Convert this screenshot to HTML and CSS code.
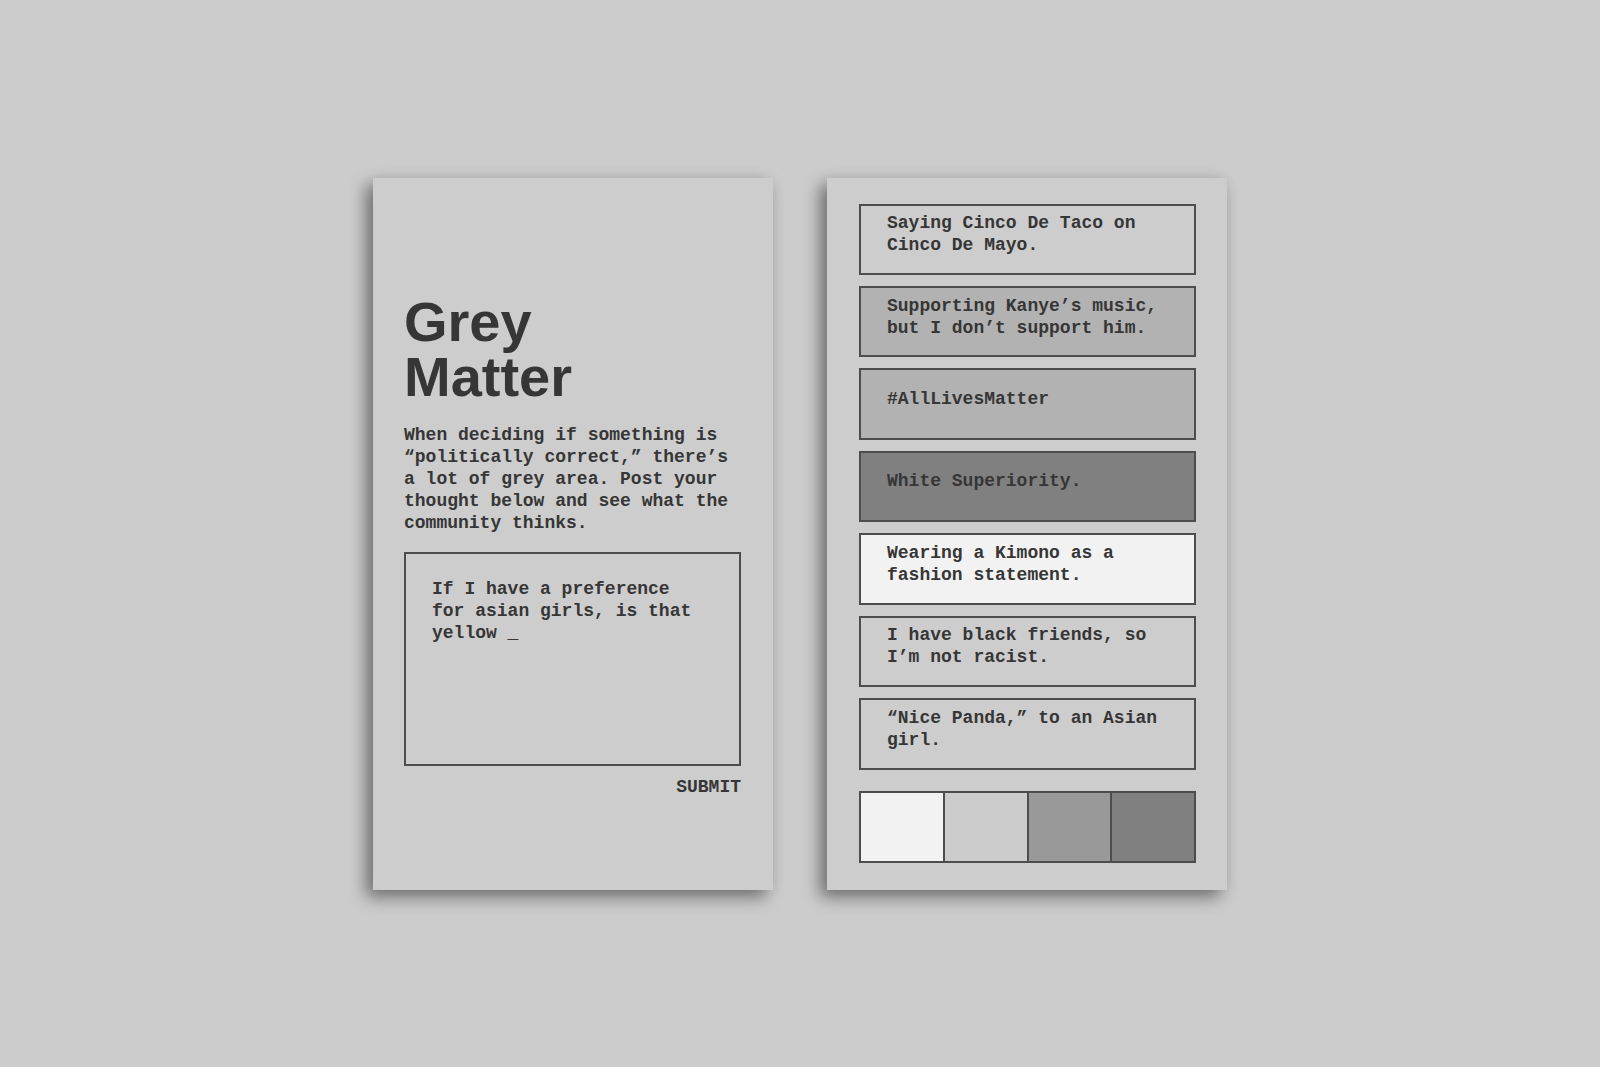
FILE: index.html
```html
<!doctype html>
<html lang="en">
<head>
	<meta charset="UTF-8">
	<meta name="viewport" content="width=device-width, initial-scale=1">
	<title>Grey Matter</title>
	<link rel="stylesheet" href="styles.css">
</head>
<body>
	<main class="screens">
		<form class="screen post">
			<h1>Grey<br>Matter</h1>
			<p class="intro"><label for="thought">When deciding if something is “politically correct,” there’s a lot of grey area. Post your thought below and see what the community thinks.</label></p>
			<textarea class="thought" id="thought" name="thought">If I have a preference
for asian girls, is that
yellow _</textarea>
			<button class="submit" type="button">SUBMIT</button>
		</form>
		<section class="screen feed">
			<ul class="list">
				<li>Saying Cinco De Taco on Cinco De Mayo.</li>
				<li class="mid">Supporting Kanye’s music, but I don’t support him.</li>
				<li class="mid">#AllLivesMatter</li>
				<li class="dark">White Superiority.</li>
				<li class="white">Wearing a Kimono as a fashion statement.</li>
				<li>I have black friends, so I’m not racist.</li>
				<li>“Nice Panda,” to an Asian girl.</li>
			</ul>
			<!-- rating scale, ok to not ok -->
			<div class="scale">
				<button class="white" type="button" aria-label="White"></button>
				<button class="light" type="button" aria-label="Light grey"></button>
				<button class="grey" type="button" aria-label="Grey"></button>
				<button class="dark" type="button" aria-label="Dark grey"></button>
			</div>
		</section>
	</main>
</body>
</html>
```

FILE: styles.css
```css
*{
	box-sizing: border-box;
}
body{
	margin: 0;
	min-height: 100vh;
	display: flex;
	align-items: center;
	justify-content: center;
	background-color: #ccc;
	color: #363636;
	font: bold 18px/22px "Courier New", "Liberation Mono", monospace;
}
.screens{
	display: flex;
	flex-wrap: wrap;
	justify-content: center;
	gap: 54px;
}
.screen{
	display: flex;
	flex-direction: column;
	width: 400px;
	max-width: 100%;
	min-height: 712px;
	background-color: #cdcdcd;
	box-shadow: -7px 7px 16px rgba(0,0,0,.45), 0 0 16px rgba(0,0,0,.04);
}

/* post screen */
.post{
	padding: 116px 32px 27px 31px;
}
h1{
	margin: 0 0 20px;
	font: bold 56px/55px "Helvetica Neue", "Liberation Sans", Arial, sans-serif;
}
.intro{
	margin: 0 0 18px;
}
.thought{
	width: 100%;
	height: 214px;
	padding: 24px 26px;
	border: 2px solid #4d4d4d;
	border-radius: 0;
	background: none;
	color: inherit;
	font: inherit;
	resize: none;
	outline: none;
}
.submit{
	align-self: flex-end;
	margin-top: 10px;
	padding: 0;
	border: 0;
	background: none;
	color: inherit;
	font: inherit;
	cursor: pointer;
}

/* feed screen */
.feed{
	gap: 21px;
	padding: 26px 31px 27px 32px;
}
.list{
	flex: 1;
	display: grid;
	grid-auto-rows: 1fr;
	gap: 11px;
	margin: 0;
	padding: 0;
	list-style: none;
}
.list li{
	display: flex;
	align-items: center;
	padding: 0 26px 10px;
	border: 2px solid #4d4d4d;
}
.list .mid{
	background-color: #b2b2b2;
}
.scale{
	display: flex;
	height: 72px;
	border: 2px solid #4d4d4d;
}
.scale button{
	flex: 1;
	padding: 0;
	border: 0;
	border-left: 2px solid #4d4d4d;
	border-radius: 0;
	cursor: pointer;
}
.scale button:first-child{
	border-left: 0;
}
.white{
	background-color: #f2f2f2;
}
.light{
	background-color: #ccc;
}
.grey{
	background-color: #999;
}
.dark{
	background-color: #808080;
}
```
